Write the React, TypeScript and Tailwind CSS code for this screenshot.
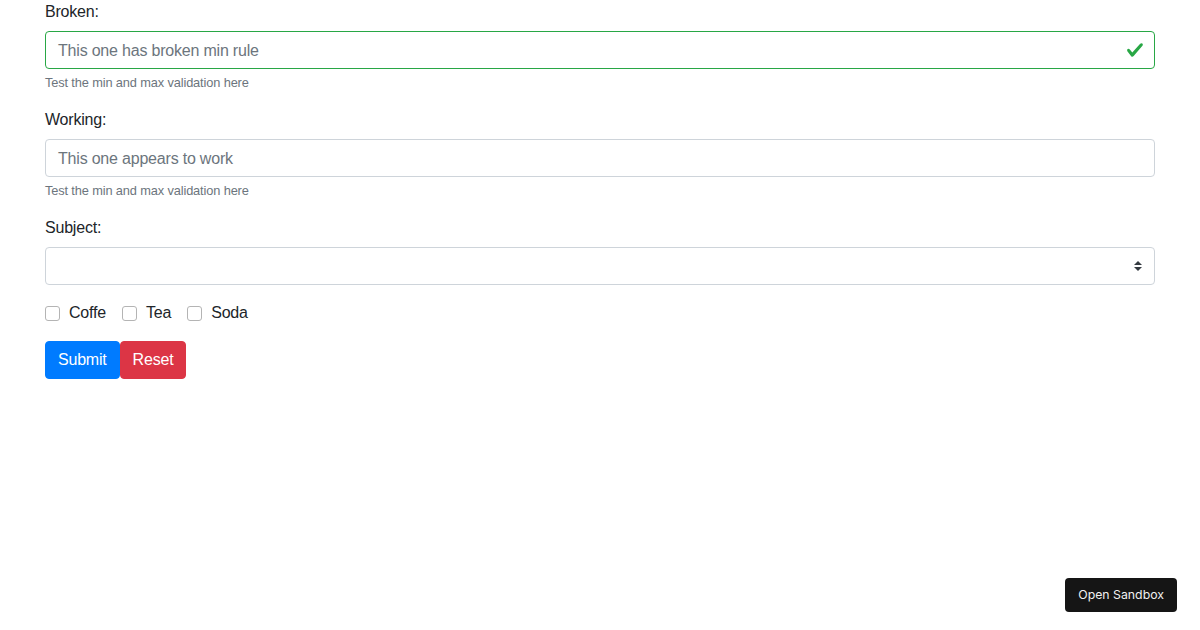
import React from "react";

const font = { fontFamily: '"Liberation Sans", Arial, sans-serif', letterSpacing: "-0.2px" };

function Check() {
  return (
    <svg width="18" height="18" viewBox="0 0 8 8" className="absolute right-[10px] top-1/2 -translate-y-1/2">
      <path
        fill="#28a745"
        d="M2.3 6.73L.6 4.53c-.4-1.04.46-1.4 1.1-.8l1.1 1.4 3.4-3.8c.6-.63 1.6-.27 1.2.7l-4 4.6c-.43.5-.8.4-1.1.1z"
      />
    </svg>
  );
}

function Box({ label }: { label: string }) {
  return (
    <label className="flex items-center mr-[16px]">
      <span className="w-[15px] h-[15px] border border-[#b4b4b4] rounded-[3px] bg-white mr-[9px] mt-[1px]" />
      <span>{label}</span>
    </label>
  );
}

export default function App() {
  return (
    <div className="w-[1200px] h-[630px] bg-white relative overflow-hidden text-[16px] leading-[24px] text-[#212529]" style={font}>
      <div className="w-[1110px] mx-auto mt-[-1px]">
        <div className="mb-[16px]">
          <div className="mb-[7px] pt-[1px]">Broken:</div>
          <div className="relative h-[38px] border border-[#28a745] rounded-[4px] flex items-center px-[12px] pt-[2px] text-[#6c757d]">
            This one has broken min rule
            <Check />
          </div>
          <div className="mt-[5px] mb-[-1px] text-[12.8px] leading-[18px] text-[#6c757d] tracking-[-0.13px]">Test the min and max validation here</div>
        </div>
        <div className="mb-[16px]">
          <div className="mb-[7px] pt-[1px]">Working:</div>
          <div className="h-[38px] border border-[#ced4da] rounded-[4px] flex items-center px-[12px] pt-[2px] text-[#6c757d]">
            This one appears to work
          </div>
          <div className="mt-[5px] mb-[-1px] text-[12.8px] leading-[18px] text-[#6c757d] tracking-[-0.13px]">Test the min and max validation here</div>
        </div>
        <div className="mb-[16px]">
          <div className="mb-[7px] pt-[1px]">Subject:</div>
          <div className="relative h-[38px] border border-[#ced4da] rounded-[4px]">
            <svg width="8" height="10" viewBox="0 0 4 5" className="absolute right-[12px] top-1/2 -translate-y-1/2">
              <path fill="#343a40" d="M2 0L0 2h4zm0 5L0 3h4z" />
            </svg>
          </div>
        </div>
        <div className="flex items-center h-[24px] mb-[16px]">
          <Box label="Coffe" />
          <Box label="Tea" />
          <Box label="Soda" />
        </div>
        <div className="flex">
          <button className="h-[38px] px-[12px] bg-[#007bff] text-white rounded-[4px] border border-[#007bff]">Submit</button>
          <button className="h-[38px] px-[12px] bg-[#dc3545] text-white rounded-[4px] border border-[#dc3545]">Reset</button>
        </div>
      </div>
      <div
        className="absolute right-[23px] bottom-[18px] h-[34px] px-[13px] flex items-center bg-[#151515] text-[#f0f0f0] rounded-[4px] text-[12.3px]"
        style={{ fontFamily: "Inter, sans-serif", letterSpacing: "0" }}
      >
        Open Sandbox
      </div>
    </div>
  );
}
